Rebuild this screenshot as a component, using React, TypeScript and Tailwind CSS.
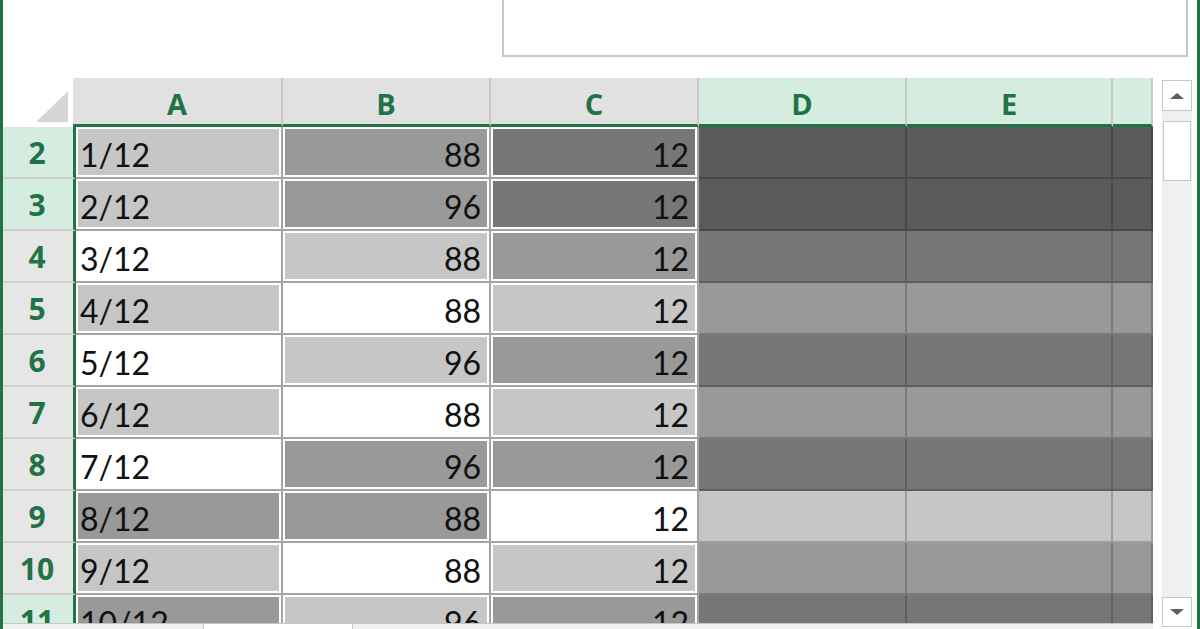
import React from 'react';

type Lv = 'W' | 'L' | 'M' | 'D' | 'X';

const fillCls: Record<Lv, string> = {
  W: 'bg-white',
  L: 'bg-[#c6c6c6]',
  M: 'bg-[#999999]',
  D: 'bg-[#777777]',
  X: 'bg-[#5b5b5b]',
};

const rows: { n: number; a: string; b: string; c: string; f: Lv[]; hl: boolean }[] = [
  { n: 2, a: '1/12', b: '88', c: '12', f: ['L', 'M', 'D', 'X'], hl: true },
  { n: 3, a: '2/12', b: '96', c: '12', f: ['L', 'M', 'D', 'X'], hl: true },
  { n: 4, a: '3/12', b: '88', c: '12', f: ['W', 'L', 'M', 'D'], hl: false },
  { n: 5, a: '4/12', b: '88', c: '12', f: ['L', 'W', 'L', 'M'], hl: false },
  { n: 6, a: '5/12', b: '96', c: '12', f: ['W', 'L', 'M', 'D'], hl: false },
  { n: 7, a: '6/12', b: '88', c: '12', f: ['L', 'W', 'L', 'M'], hl: false },
  { n: 8, a: '7/12', b: '96', c: '12', f: ['W', 'M', 'M', 'D'], hl: false },
  { n: 9, a: '8/12', b: '88', c: '12', f: ['M', 'M', 'W', 'L'], hl: false },
  { n: 10, a: '9/12', b: '88', c: '12', f: ['L', 'W', 'L', 'M'], hl: false },
  { n: 11, a: '10/12', b: '96', c: '12', f: ['M', 'L', 'M', 'D'], hl: true },
];

function ValueCell({ w, lv, text, right }: { w: string; lv: Lv; text: string; right?: boolean }) {
  return (
    <div className={`${w} h-full shrink-0 border-r-2 border-b-2 border-[#a4a4a4] bg-white p-[2px]`}>
      <div
        className={`${fillCls[lv]} h-full flex items-center pt-[5px] text-[32px] leading-none text-[#111] font-['Lato',sans-serif] ${
          right ? 'justify-end pr-[6px]' : 'justify-start pl-[2px]'
        }`}
      >
        {text}
      </div>
    </div>
  );
}

function DarkCell({ w, lv }: { w: string; lv: Lv }) {
  return <div className={`${w} h-full shrink-0 border-r-2 border-b-2 border-black/20 ${fillCls[lv]}`} />;
}

const headers: { l: string; w: string; sel: boolean }[] = [
  { l: 'A', w: 'w-[210px]', sel: false },
  { l: 'B', w: 'w-[208px]', sel: false },
  { l: 'C', w: 'w-[208px]', sel: false },
  { l: 'D', w: 'w-[208px]', sel: true },
  { l: 'E', w: 'w-[206px]', sel: true },
  { l: '', w: 'w-[40px]', sel: true },
];

export default function App() {
  return (
    <div className="w-[1200px] h-[629px] bg-white border-l-[3px] border-r-[3px] border-[#217346] flex flex-col overflow-hidden">
      {/* top area with formula box */}
      <div className="h-[78px] shrink-0">
        <div className="ml-[499px] w-[686px] h-[57px] border-2 border-t-0 border-[#c8c8c8] bg-white" />
      </div>

      <div className="flex-1 min-h-0 flex">
        {/* grid */}
        <div className="w-[1150px] shrink-0 flex flex-col">
          <div className="flex-1 min-h-0 overflow-hidden">
            {/* header row */}
            <div className="flex h-[49px]">
              <div className="w-[70px] h-full shrink-0 bg-white flex items-end justify-end pr-[5px] pb-[5px]">
                <div className="w-0 h-0 border-l-[32px] border-l-transparent border-b-[31px] border-b-[#d6d6d6]" />
              </div>
              {headers.map((h, i) => (
                <div
                  key={i}
                  className={`${h.w} h-full shrink-0 border-b-[3px] border-b-[#217346] border-r-2 border-r-[#c9c9c9] ${
                    h.sel ? 'bg-[#d4ede0]' : 'bg-[#e1e1e1]'
                  } flex items-center justify-center text-[29px] font-bold text-[#217346] font-['Open_Sans',sans-serif] leading-none pt-[4px]`}
                >
                  {h.l}
                </div>
              ))}
            </div>

            {rows.map((r) => (
              <div key={r.n} className="flex h-[52px]">
                <div
                  className={`w-[73px] h-full shrink-0 border-r-[3px] border-r-[#217346] border-b-2 border-b-[#cfcfcf] ${
                    r.hl ? 'bg-[#d4ede0]' : 'bg-[#e6e6e6]'
                  } flex items-center justify-center pr-[2px] pt-[2px] text-[30px] font-bold text-[#217346] font-['Open_Sans',sans-serif] leading-none`}
                >
                  {r.n}
                </div>
                <ValueCell w="w-[207px]" lv={r.f[0]} text={r.a} />
                <ValueCell w="w-[208px]" lv={r.f[1]} text={r.b} right />
                <ValueCell w="w-[208px]" lv={r.f[2]} text={r.c} right />
                <DarkCell w="w-[208px]" lv={r.f[3]} />
                <DarkCell w="w-[206px]" lv={r.f[3]} />
                <DarkCell w="w-[40px]" lv={r.f[3]} />
              </div>
            ))}
          </div>
          {/* sheet tab strip */}
          <div className="h-[6px] shrink-0 border-t border-[#c6c6c6] bg-[#f0f0f0] flex">
            <div className="ml-[200px] w-[150px] h-full bg-white border-x border-[#c6c6c6]" />
          </div>
        </div>

        {/* vertical scrollbar */}
        <div className="ml-[9px] w-[30px] shrink-0 pt-[2px] pb-[2px] flex flex-col">
          <div className="h-[31px] shrink-0 bg-white border border-[#c6c6c6] flex items-center justify-center">
            <div className="w-0 h-0 border-l-[7px] border-r-[7px] border-l-transparent border-r-transparent border-b-[6px] border-b-[#606060]" />
          </div>
          <div className="flex-1 bg-[#f0f0f0] px-[1px]">
            <div className="mt-[10px] h-[60px] bg-white border border-[#c6c6c6]" />
          </div>
          <div className="h-[30px] shrink-0 bg-white border border-[#c6c6c6] flex items-center justify-center">
            <div className="w-0 h-0 border-l-[7px] border-r-[7px] border-l-transparent border-r-transparent border-t-[6px] border-t-[#606060]" />
          </div>
        </div>
      </div>
    </div>
  );
}
